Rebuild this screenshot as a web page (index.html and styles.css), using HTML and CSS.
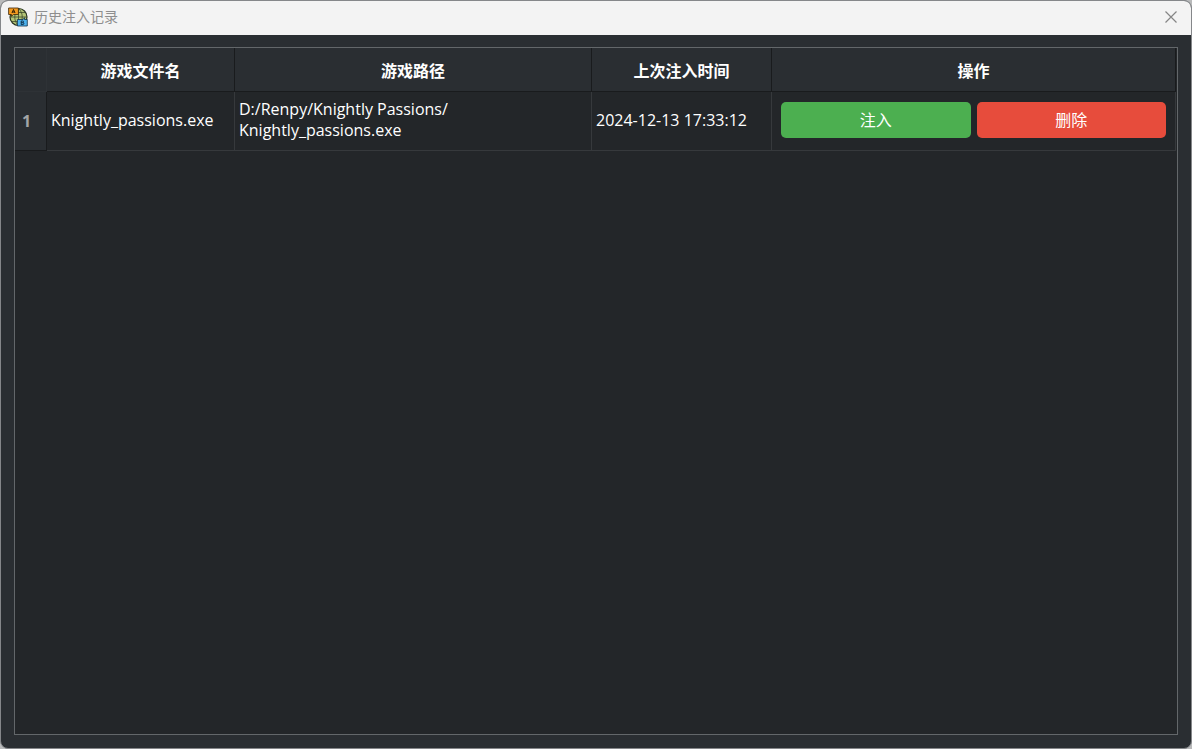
FILE: index.html
```html
<!DOCTYPE html>
<html lang="zh-CN">
<head>
    <meta charset="UTF-8">
    <meta name="viewport" content="width=device-width, initial-scale=1.0">
    <title>历史注入记录</title>
    <link rel="stylesheet" href="styles.css">
</head>
<body>

    <div class="window">
        <header class="titlebar">
            <svg class="logo" viewBox="0 0 20 20" aria-hidden="true">
                <circle cx="10.500" cy="10" r="8.500" fill="#b3c476" stroke="#26301f" stroke-width="1.2"/>
                <path d="M10.500 1.500v17M2 10h17M3.500 14.500h14M4.500 5.500h13M10.500 1.500c-5 4-5 13 0 17M10.500 1.500c5 4 5 13 0 17" fill="none" stroke="#3d4a2c" stroke-width=".8"/>
                <path d="M.6 1h9.800v6.500H5.500L3.500 9.300V7.500H.6z" fill="#f39a1f" stroke="#3a2408" stroke-width=".8"/>
                <path d="M4 6l1.500-3.500L7 6M4.500 5h2" fill="none" stroke="#2b1a05" stroke-width="1"/>
                <path d="M9.400 12.500h5.600l1.500-1.800v1.800h2.800V19H9.400z" fill="#4db2ee" stroke="#12314a" stroke-width=".8"/>
                <path d="M13.200 14v3.500h1.700q1 0 1-.9t-1-.9h-1.700M13.200 14h1.500q.9 0 .9.800t-.9.900" fill="none" stroke="#0d2942" stroke-width=".9"/>
            </svg>
            <h1 class="title">历史注入记录</h1>
            <button class="close" type="button" aria-label="关闭">
                <svg viewBox="0 0 12 12" width="12" height="12">
                    <path d="M.5.5l11 11M11.500.5l-11 11" fill="none" stroke="#858585" stroke-width="1.2"/>
                </svg>
            </button>
        </header>

        <main class="content">
            <div class="table-frame">
                <table class="history">
                    <colgroup>
                        <col class="col-index">
                        <col class="col-name">
                        <col class="col-path">
                        <col class="col-time">
                        <col class="col-action">
                    </colgroup>
                    <thead>
                        <tr>
                            <td class="corner"></td>
                            <th scope="col">游戏文件名</th>
                            <th scope="col">游戏路径</th>
                            <th scope="col">上次注入时间</th>
                            <th scope="col">操作</th>
                        </tr>
                    </thead>
                    <tbody>
                        <tr>
                            <th class="index" scope="row">1</th>
                            <td>Knightly_passions.exe</td>
                            <td>D:/Renpy/Knightly Passions/<wbr><span class="file">Knightly_passions.exe</span></td>
                            <td>2024-12-13 17:33:12</td>
                            <td>
                                <div class="actions">
                                    <button class="button inject" type="button">注入</button>
                                    <button class="button delete" type="button">删除</button>
                                </div>
                            </td>
                        </tr>
                    </tbody>
                </table>
            </div>
        </main>
    </div>

</body>
</html>
```
FILE: styles.css
```css
* {
    box-sizing: border-box;
}

body {
    margin: 0;
    background: #b9babb;
    font-family: "Open Sans", "Noto Sans CJK SC", sans-serif;
    font-size: 16px;
    line-height: 21px;
    color: #fff;
}

.window {
    display: flex;
    flex-direction: column;
    min-height: 100vh;
    border: 1px solid #85878a;
    border-radius: 8px;
    overflow: hidden;
    background: #2a2e32;
}

.titlebar {
    display: flex;
    align-items: center;
    height: 34px;
    padding: 0 14px 2px 7px;
    background: #f3f3f3;
}

.logo {
    width: 20px;
    height: 20px;
}

.title {
    margin: 0 auto 0 6px;
    padding-bottom: 2px;
    font-size: 14px;
    font-weight: normal;
    color: #8e8e8e;
}

.close {
    display: flex;
    padding: 0;
    border: none;
    background: none;
    cursor: pointer;
}

.content {
    display: flex;
    flex: 1;
    padding: 12px 13px 13px;
}

.table-frame {
    flex: 1;
    padding-right: 1px;
    border: 1px solid #63676a;
    background: #232629;
}

.history {
    width: 100%;
    table-layout: fixed;
    border-collapse: separate;
    border-spacing: 0;
}

.col-index { width: 32px; }
.col-name { width: 188px; }
.col-path { width: 357px; }
.col-time { width: 180px; }

.history thead tr {
    height: 44px;
}

.history tbody tr {
    height: 59px;
}

.history th,
.history .corner {
    padding: 4px 0 0;
    border-right: 1px solid #191b1d;
    border-bottom: 1px solid #191b1d;
    background: #2a2e32;
    font-weight: bold;
}

.history .corner {
    border-color: #2e3236;
}

.history td {
    padding: 0 4px 2px;
    border-right: 1px solid #36393c;
    border-bottom: 1px solid #36393c;
}

.history .index {
    padding: 0 8px 0 0;
    color: #a3a5a7;
}

.file {
    display: inline-block;
}

.actions {
    display: flex;
    gap: 6px;
    padding: 0 5px;
}

.button {
    flex: 1;
    height: 36px;
    padding: 0;
    border: none;
    border-radius: 5px;
    font: inherit;
    color: #fff;
    cursor: pointer;
}

.inject {
    background: #4caf50;
}

.delete {
    background: #e74c3c;
}
```
